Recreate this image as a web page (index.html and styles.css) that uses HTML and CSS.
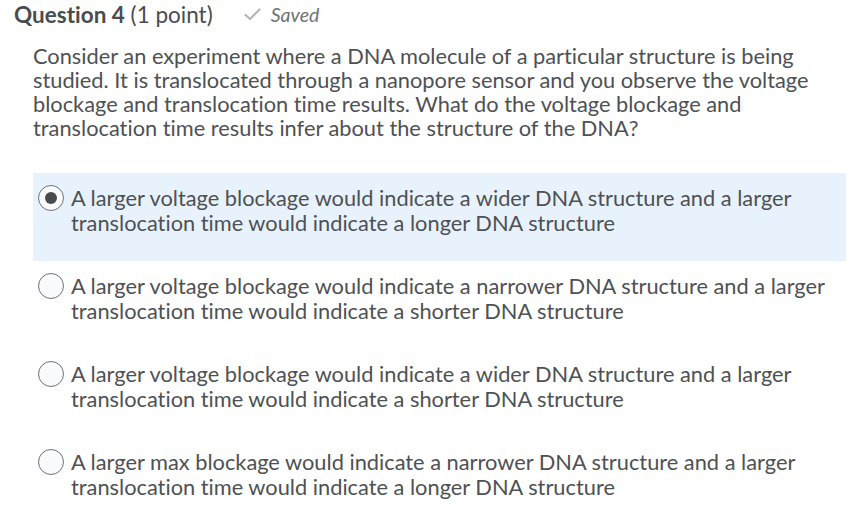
FILE: index.html
```html
<!DOCTYPE html>
<html>
<head>
<meta charset="utf-8">
<link rel="stylesheet" href="styles.css">
</head>
<body>
<div class="page">
  <div class="header">
    <span class="title"><strong>Question 4</strong> (1 point)</span>
    <span class="saved">
      <svg class="check" width="17" height="13" viewBox="0 0 17 13"><path d="M1.5 7 L6 11 L15.5 1.5" fill="none" stroke="#b3b6b8" stroke-width="2.2" stroke-linecap="round" stroke-linejoin="round"/></svg>
      <em>Saved</em>
    </span>
  </div>
  <p class="prompt">Consider an experiment where a DNA molecule of a particular structure is being studied. It is translocated through a nanopore sensor and you observe the voltage blockage and translocation time results. What do the voltage blockage and translocation time results infer about the structure of the DNA?</p>
  <div class="options">
    <label class="option selected">
      <span class="radio checked"></span>
      <span class="text">A larger voltage blockage would indicate a wider DNA structure and a larger translocation time would indicate a longer DNA structure</span>
    </label>
    <label class="option">
      <span class="radio"></span>
      <span class="text">A larger voltage blockage would indicate a narrower DNA structure and a larger translocation time would indicate a shorter DNA structure</span>
    </label>
    <label class="option">
      <span class="radio"></span>
      <span class="text">A larger voltage blockage would indicate a wider DNA structure and a larger translocation time would indicate a shorter DNA structure</span>
    </label>
    <label class="option">
      <span class="radio"></span>
      <span class="text">A larger max blockage would indicate a narrower DNA structure and a larger translocation time would indicate a longer DNA structure</span>
    </label>
  </div>
</div>
</body>
</html>
```
FILE: styles.css
```css
html, body {
  margin: 0;
  padding: 0;
  background: #ffffff;
}
body {
  font-family: Lato, "Open Sans", sans-serif;
  color: #4e5154;
  font-variant-ligatures: none;
}
.page {
  padding: 0 15px 0 14px;
}
.header {
  display: flex;
  align-items: center;
  gap: 31px;
  height: 29px;
}
.title {
  font-size: 22.5px;
  color: #494c4e;
}
.title strong {
  font-weight: 700;
}
.saved {
  display: flex;
  align-items: center;
  gap: 10px;
  font-size: 19.5px;
  color: #6e7376;
}
.prompt {
  margin: 15px 0 0 19px;
  font-size: 21.8px;
  line-height: 24px;
  width: 800px;
}
.options {
  margin: 33px 0 0 19px;
  display: flex;
  flex-direction: column;
}
.option {
  display: flex;
  align-items: flex-start;
  gap: 7px;
  padding: 12px 10px 26px 5px;
  height: 50px;
  font-size: 21.8px;
  line-height: 25px;
}
.option.selected {
  background: #e8f2fd;
}
.radio {
  flex: none;
  width: 24px;
  height: 24px;
  border: 1px solid #6e7376;
  border-radius: 50%;
  background: #f9fafb;
  position: relative;
}
.radio.checked::after {
  content: "";
  position: absolute;
  left: 6px;
  top: 6px;
  width: 12px;
  height: 12px;
  border-radius: 50%;
  background: #494c4e;
}
.text {
  display: block;
}
```
